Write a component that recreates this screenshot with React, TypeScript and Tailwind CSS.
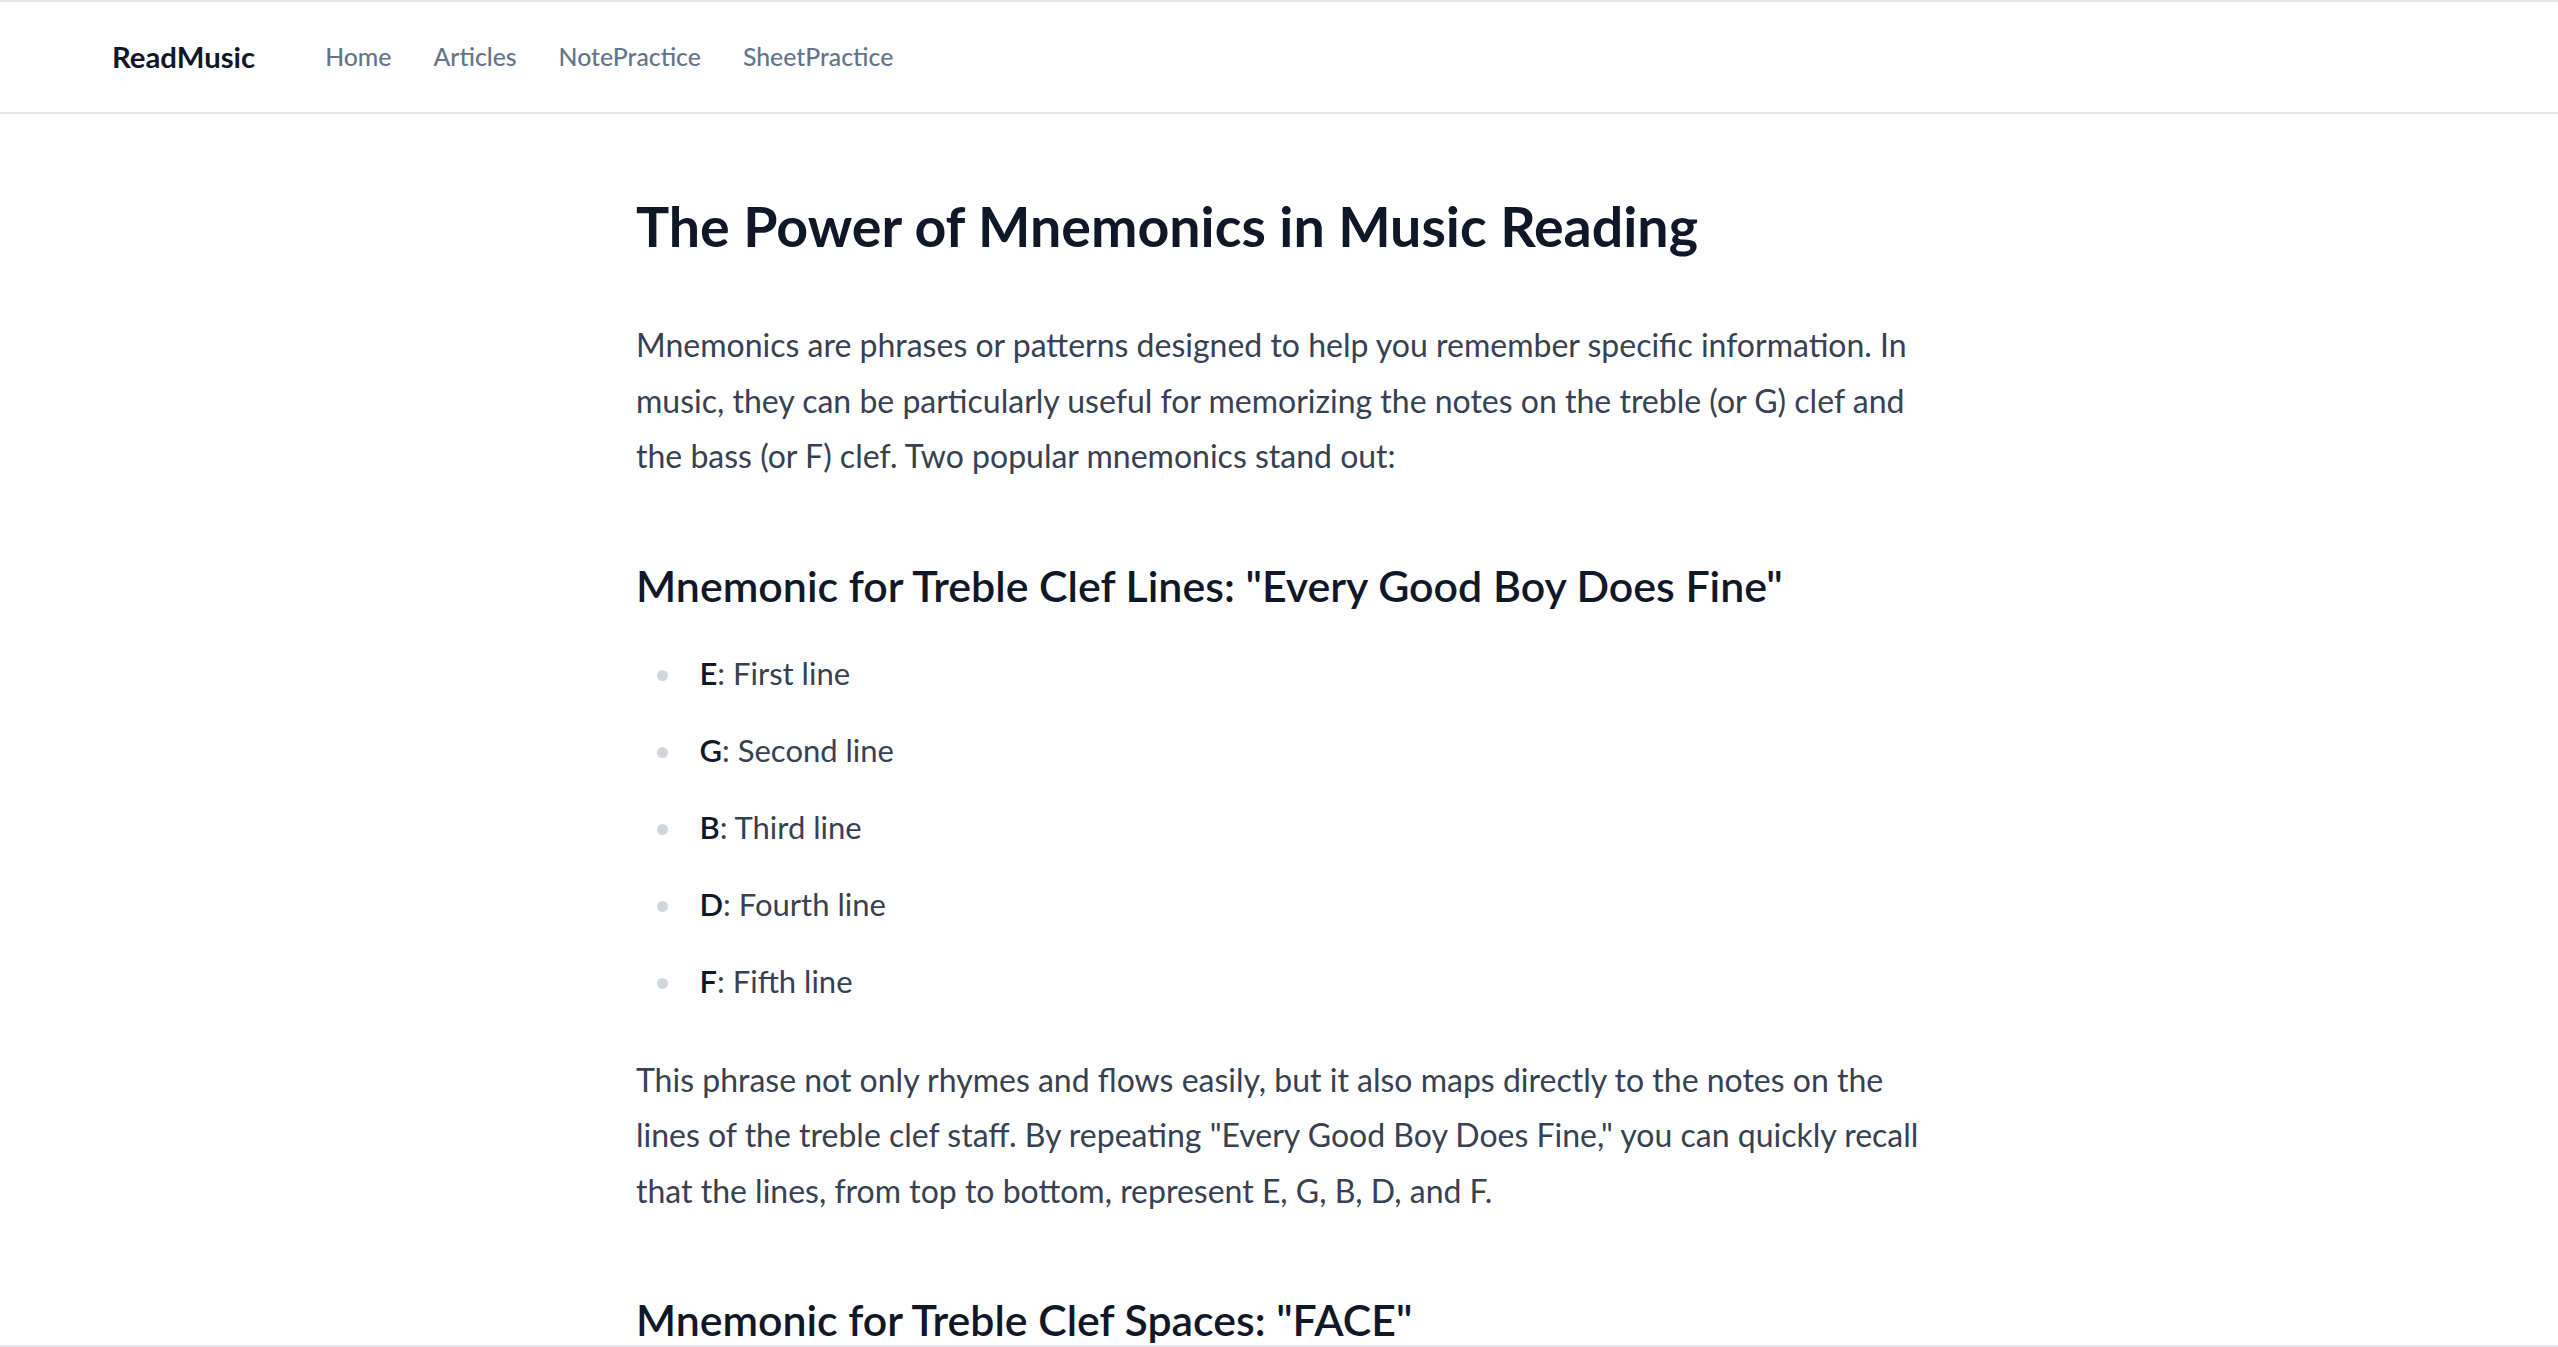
import React from "react";

const navLinks = ["Home", "Articles", "NotePractice", "SheetPractice"];

const trebleLines = [
  { note: "E", label: "First line" },
  { note: "G", label: "Second line" },
  { note: "B", label: "Third line" },
  { note: "D", label: "Fourth line" },
  { note: "F", label: "Fifth line" },
];

export default function App() {
  return (
    <div className="h-[1347px] overflow-hidden border-y-2 border-gray-200 bg-white font-['Lato',sans-serif]">
      <header className="h-[112px] border-b-2 border-gray-200 flex items-center px-[112px]">
        <span className="text-[29.3px] font-bold text-gray-900">ReadMusic</span>
        <nav className="ml-[70px] flex gap-[42px]">
          {navLinks.map((l) => (
            <a key={l} href="#" className="text-[24.8px] font-medium text-[#64748b]">
              {l}
            </a>
          ))}
        </nav>
      </header>

      <main className="ml-[636px] w-[1300px] pt-[81px] text-[#374151]">
        <h1 className="text-[55.5px] leading-[62px] font-bold text-gray-900">
          The Power of Mnemonics in Music Reading
        </h1>

        <p className="mt-[60px] text-[32px] leading-[55.5px]">
          Mnemonics are phrases or patterns designed to help you remember specific information. In
          music, they can be particularly useful for memorizing the notes on the treble (or G) clef and
          the bass (or F) clef. Two popular mnemonics stand out:
        </p>

        <h2 className="mt-[74px] text-[42.9px] leading-[56px] font-semibold text-gray-900">
          Mnemonic for Treble Clef Lines: "Every Good Boy Does Fine"
        </h2>

        <ul className="mt-[32px] flex flex-col gap-[21.5px]">
          {trebleLines.map((item) => (
            <li key={item.note} className="flex items-start text-[31px] leading-[55.5px]">
              <span className="mt-[24.5px] ml-[20.5px] mr-[32px] w-[11px] h-[11px] rounded-full bg-gray-300 shrink-0" />
              <span>
                <strong className="font-semibold text-gray-900">{item.note}</strong>: {item.label}
              </span>
            </li>
          ))}
        </ul>

        <p className="mt-[42.5px] text-[32px] leading-[55.5px]">
          This phrase not only rhymes and flows easily, but it also maps directly to the notes on the
          lines of the treble clef staff. By repeating "Every Good Boy Does Fine," you can quickly recall
          that the lines, from top to bottom, represent E, G, B, D, and F.
        </p>

        <h2 className="mt-[73.5px] text-[42.8px] leading-[56px] font-semibold text-gray-900">
          Mnemonic for Treble Clef Spaces: "FACE"
        </h2>
      </main>
    </div>
  );
}
